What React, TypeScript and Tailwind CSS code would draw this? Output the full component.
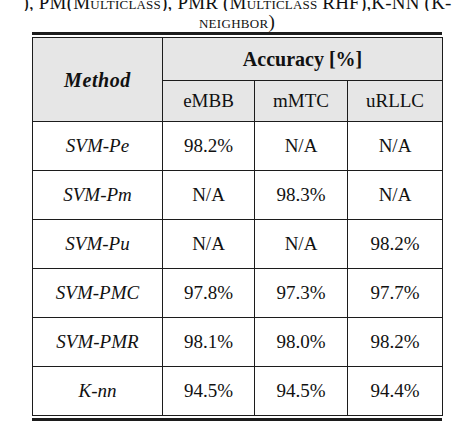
import React from "react";

type Row = {
  method: string;
  embb: string;
  mmtc: string;
  urllc: string;
};

const rows: Row[] = [
  { method: "SVM-Pe", embb: "98.2%", mmtc: "N/A", urllc: "N/A" },
  { method: "SVM-Pm", embb: "N/A", mmtc: "98.3%", urllc: "N/A" },
  { method: "SVM-Pu", embb: "N/A", mmtc: "N/A", urllc: "98.2%" },
  { method: "SVM-PMC", embb: "97.8%", mmtc: "97.3%", urllc: "97.7%" },
  { method: "SVM-PMR", embb: "98.1%", mmtc: "98.0%", urllc: "98.2%" },
  { method: "K-nn", embb: "94.5%", mmtc: "94.5%", urllc: "94.4%" },
];

const cell =
  "border border-[#1c1c1c] text-center align-middle p-0 font-['Liberation_Serif','Times_New_Roman',serif]";

export default function App() {
  return (
    <div className="w-[474px] h-[421px] bg-white overflow-hidden text-[#111] font-['Liberation_Serif','Times_New_Roman',serif]">
      {/* caption, first line is cut off by the crop */}
      <div className="h-[11px] overflow-hidden flex justify-center">
        <p className="whitespace-nowrap text-[19px] leading-[20px] -mt-[7px] [font-variant:small-caps] tracking-[0.2px] shrink-0">
          ), PM(Multiclass), PMR (Multiclass RHF),K-NN (K-
        </p>
      </div>
      <p className="text-center text-[19px] leading-[20px] mt-[1px] [font-variant:small-caps] tracking-[0.3px]">
        neighbor)
      </p>

      <div className="ml-[32px] w-[410px]">
        <div className="h-[3px] bg-[#1c1c1c]" />
        <table className="mt-[2px] w-[410px] border-collapse table-fixed font-['Liberation_Serif','Times_New_Roman',serif]">
          <colgroup>
            <col className="w-[130px]" />
            <col className="w-[92px]" />
            <col className="w-[93px]" />
            <col className="w-[95px]" />
          </colgroup>
          <thead className="bg-[#e6e6e6]">
            <tr className="h-[43px]">
              <th rowSpan={2} className={`${cell} text-[20px] font-bold italic tracking-[0.6px]`}>
                Method
              </th>
              <th colSpan={3} className={`${cell} text-[20px] font-bold`}>
                Accuracy [%]
              </th>
            </tr>
            <tr className="h-[41px]">
              <th className={`${cell} text-[19px] font-normal`}>eMBB</th>
              <th className={`${cell} text-[19px] font-normal`}>mMTC</th>
              <th className={`${cell} text-[19px] font-normal`}>uRLLC</th>
            </tr>
          </thead>
          <tbody>
            {rows.map((r) => (
              <tr key={r.method} className="h-[49px] text-[19px]">
                <td className={`${cell} italic`}>{r.method}</td>
                <td className={cell}>{r.embb}</td>
                <td className={cell}>{r.mmtc}</td>
                <td className={cell}>{r.urllc}</td>
              </tr>
            ))}
          </tbody>
        </table>
        <div className="mt-[2px] h-[3px] bg-[#1c1c1c]" />
      </div>
    </div>
  );
}
